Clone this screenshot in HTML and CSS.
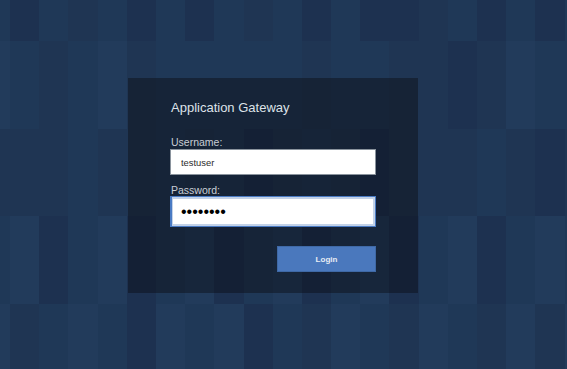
FILE: index.html
```html
<!DOCTYPE html>
<html lang="en">
<head>
<meta charset="utf-8">
<title>Application Gateway</title>
<link rel="stylesheet" href="styles.css">
</head>
<body>
<div class="bg" aria-hidden="true">
  <div class="tiles">
    <i class="c"></i><i class="a"></i><i class="c"></i><i class="b"></i><i class="c"></i><i class="a"></i><i class="c"></i><i class="a"></i><i class="c"></i><i class="b"></i><i class="c"></i><i class="a"></i><i class="c"></i><i class="a"></i><i class="a"></i><i class="b"></i><i class="c"></i><i class="a"></i><i class="c"></i><i class="a"></i><i class="c"></i>
    <i class="d"></i><i class="c"></i><i class="b"></i><i class="c"></i><i class="d"></i><i class="b"></i><i class="c"></i><i class="c"></i><i class="c"></i><i class="c"></i><i class="c"></i><i class="b"></i><i class="c"></i><i class="c"></i><i class="b"></i><i class="b"></i><i class="a"></i><i class="b"></i><i class="d"></i><i class="c"></i><i class="c"></i>
    <i class="b"></i><i class="b"></i><i class="b"></i><i class="c"></i><i class="b"></i><i class="b"></i><i class="c"></i><i class="b"></i><i class="c"></i><i class="a"></i><i class="b"></i><i class="c"></i><i class="b"></i><i class="a"></i><i class="b"></i><i class="b"></i><i class="b"></i><i class="c"></i><i class="b"></i><i class="a"></i><i class="b"></i>
    <i class="c"></i><i class="d"></i><i class="a"></i><i class="c"></i><i class="d"></i><i class="a"></i><i class="c"></i><i class="d"></i><i class="a"></i><i class="c"></i><i class="d"></i><i class="a"></i><i class="c"></i><i class="d"></i><i class="a"></i><i class="c"></i><i class="d"></i><i class="a"></i><i class="c"></i><i class="d"></i><i class="c"></i>
    <i class="d"></i><i class="b"></i><i class="c"></i><i class="d"></i><i class="c"></i><i class="a"></i><i class="d"></i><i class="c"></i><i class="d"></i><i class="a"></i><i class="c"></i><i class="b"></i><i class="d"></i><i class="c"></i><i class="b"></i><i class="d"></i><i class="c"></i><i class="b"></i><i class="d"></i><i class="b"></i><i class="d"></i>
  </div>
</div>
<main class="stage">
  <form class="card" onsubmit="return false">
    <h1 class="title">Application Gateway</h1>
    <label class="label label-user" for="username">Username:</label>
    <input class="field" id="username" type="text" value="testuser">
    <label class="label label-pass" for="password">Password:</label>
    <input class="field field-active" id="password" type="password" value="password">
    <div class="actions">
      <button class="btn" type="submit">Login</button>
    </div>
  </form>
</main>
</body>
</html>
```
FILE: styles.css
```css
html, body {
  margin: 0;
  padding: 0;
}
body {
  width: 567px;
  height: 369px;
  overflow: hidden;
  position: relative;
  background: #1f3656;
  font-family: "Liberation Sans", Arial, sans-serif;
}
.bg {
  position: absolute;
  inset: 0;
  overflow: hidden;
  z-index: 0;
}
.tiles {
  display: grid;
  grid-template-columns: repeat(21, 29.2px);
  grid-auto-rows: 87.7px;
  width: max-content;
  margin: -46.7px 0 0 -19.2px;
}
.tiles i { display: block; }
.tiles .a { background: #1d3150; }
.tiles .b { background: #1f3553; }
.tiles .c { background: #1f3857; }
.tiles .d { background: #223b5b; }

.stage {
  position: relative;
  z-index: 1;
  padding: 78px 0 0 128px;
}
.card {
  box-sizing: border-box;
  width: 290px;
  padding: 22px 42px 21px;
  background: rgba(10, 14, 20, 0.45);
  display: flex;
  flex-direction: column;
}
.title {
  margin: 0 0 0 1px;
  font-size: 13px;
  line-height: 15px;
  font-weight: normal;
  color: #dde2e8;
}
.label {
  display: block;
  margin-left: 1px;
  font-size: 10.5px;
  line-height: 12px;
  color: #c9ced5;
}
.label-user {
  margin-top: 21px;
  margin-bottom: 1px;
}
.label-pass {
  margin-top: 9px;
}
.field {
  box-sizing: border-box;
  width: 206px;
  height: 26px;
  margin: 0;
  padding: 0 10px;
  border: 1px solid #8a939d;
  border-radius: 0;
  background: #fff;
  font-family: "Liberation Sans", Arial, sans-serif;
  font-size: 9.4px;
  color: #2b2b2b;
  outline: none;
}
.field-active {
  height: 31px;
  border-color: #4a7bc4;
  box-shadow: inset 1px 0 0 #4a7bc4, inset 0 0 0 2px #c3d2e8;
  font-size: 16px;
  color: #000;
}
.actions {
  display: flex;
  justify-content: flex-end;
  margin-top: 19px;
}
.btn {
  box-sizing: border-box;
  width: 99px;
  height: 26px;
  margin: 0;
  padding: 0;
  border: 1px solid #3f69a6;
  border-radius: 0;
  background: #4a78bd;
  color: #e8edf4;
  font-family: "Liberation Sans", Arial, sans-serif;
  font-weight: bold;
  font-size: 8px;
  cursor: pointer;
}
```
